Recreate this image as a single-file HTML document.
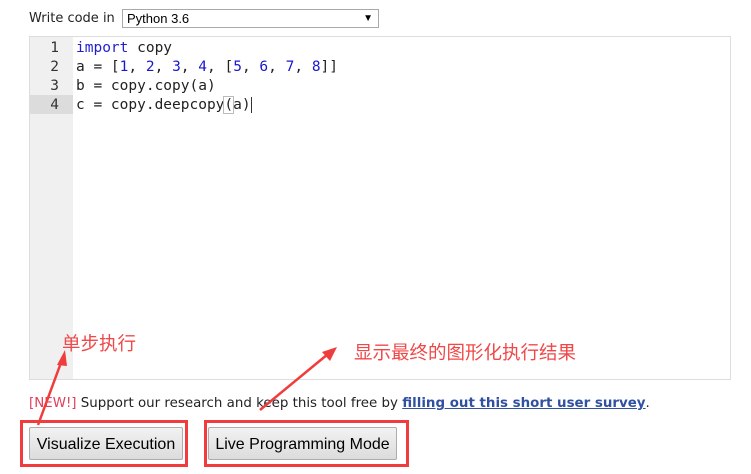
<!DOCTYPE html>
<html><head><meta charset="utf-8"><style>
body{margin:0;width:751px;height:474px;background:#fff;position:relative;overflow:hidden;font-family:"DejaVu Sans","Liberation Sans",sans-serif;}
.a{position:absolute;}
.sel{left:122px;top:9px;border:1px solid #a9a9a9;font:13px "Liberation Sans",sans-serif;line-height:17px;padding-left:4px;box-sizing:border-box;width:257px;height:19px}
.ed{left:29px;top:36px;width:702px;height:344px;border:1px solid #ddd;box-sizing:border-box;}
.gut{left:0;top:0;width:43px;height:100%;background:#f0f0f0;}
.ln{font:14.5px "DejaVu Sans Mono","Liberation Mono",monospace;line-height:19px;}
.btn{top:427px;height:33px;border:1px solid #adadad;background:linear-gradient(#f2f2f2,#dcdcdc);font:16px "Liberation Sans",sans-serif;line-height:33px;text-align:center;box-sizing:border-box;border-radius:2px;}
.box{border:3px solid #f03c3c;box-sizing:border-box;}
.cn{color:#f04848;font:18.5px "Noto Sans CJK SC",sans-serif;line-height:22px;}
.n{color:#1818d0}
</style></head><body>
<div class="a" style="left:29px;top:10px;font-size:13px;line-height:17px;color:#222">Write code in</div>
<div class="a sel">Python 3.6<span style="position:absolute;right:5px;font-size:10px">▼</span></div>
<div class="a ed">
 <div class="a gut"></div>
 <div class="a" style="left:0;top:58px;width:43px;height:19px;background:#dcdcdc"></div>
 <div class="a ln" style="left:0;top:2px;width:29px;text-align:right;color:#333">1<br>2<br>3<br>4</div>
 <div class="a ln" style="left:46px;top:2px;color:#222;white-space:pre"><span style="color:#1f1fd0">import</span> copy
a = [<span class="n">1</span>, <span class="n">2</span>, <span class="n">3</span>, <span class="n">4</span>, [<span class="n">5</span>, <span class="n">6</span>, <span class="n">7</span>, <span class="n">8</span>]]
b = copy.copy(a)
c = copy.deepcopy<span style="outline:1px solid #bbb">(</span>a)<span style="border-left:1px solid #333"></span></div>
</div>
<div class="a" style="left:29px;top:395px;font-size:13.4px;line-height:17px;color:#222;white-space:nowrap"><span style="color:#e0405a">[NEW!]</span> Support our research and keep this tool free by <a style="color:#3050a0;font-weight:bold;text-decoration:underline">filling out this short user survey</a>.</div>
<div class="a btn" style="left:29px;width:154px">Visualize Execution</div>
<div class="a btn" style="left:208px;width:189px">Live Programming Mode</div>
<div class="a box" style="left:20px;top:420px;width:168px;height:47px"></div>
<div class="a box" style="left:204px;top:420px;width:205px;height:47px"></div>
<div class="a cn" style="left:62px;top:332px">单步执行</div>
<div class="a cn" style="left:354px;top:341px">显示最终的图形化执行结果</div>
<svg class="a" style="left:0;top:0" width="751" height="474">
<g stroke="#f03c3c" stroke-width="2.5" fill="#f03c3c">
<line x1="38" y1="425" x2="62" y2="360"/>
<polygon points="65,350 57,365 67,366" stroke="none"/>
<line x1="260" y1="410" x2="328" y2="354"/>
<polygon points="337,347 322,352 330,361" stroke="none"/>
</g></svg>
</body></html>
